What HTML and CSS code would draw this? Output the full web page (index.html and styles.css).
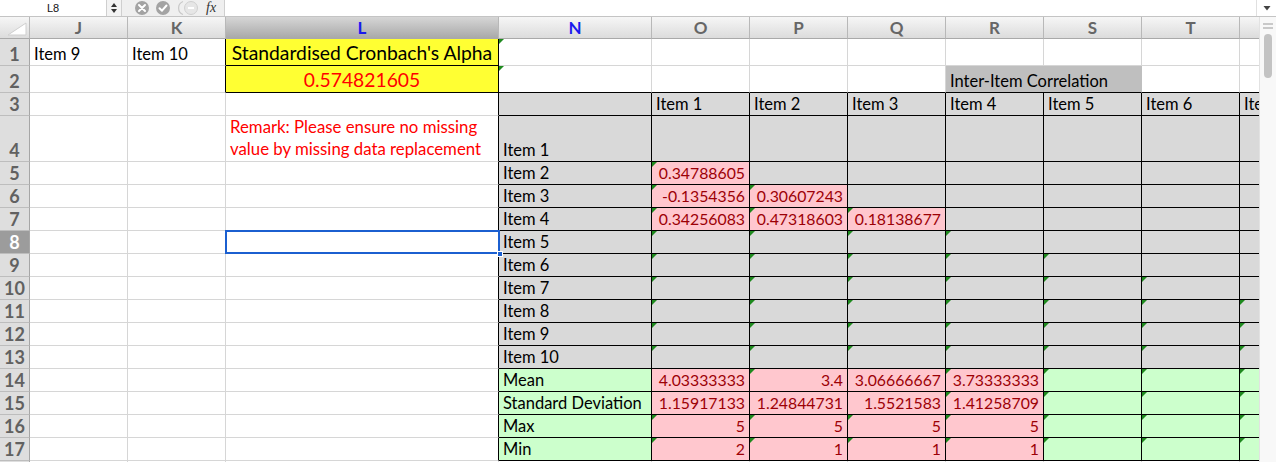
FILE: index.html
```html
<!DOCTYPE html>
<html>
<head>
<meta charset="utf-8">
<link rel="stylesheet" href="styles.css">
</head>
<body>
<div class="fbar">
  <div class="namebox">L8</div>
  <div class="stepper">
    <svg width="8" height="12" viewBox="0 0 8 12"><path d="M4 1 L7 5 L1 5 Z M4 11 L7 7 L1 7 Z" fill="#333"/></svg>
  </div>
  <div class="fbtns">
    <svg class="ico" width="16" height="16" viewBox="0 0 16 16"><circle cx="8" cy="8" r="7" fill="#a3a3a3"/><path d="M5 5 L11 11 M11 5 L5 11" stroke="#fff" stroke-width="2" stroke-linecap="round"/></svg>
    <svg class="ico" width="16" height="16" viewBox="0 0 16 16"><circle cx="8" cy="8" r="7" fill="#a3a3a3"/><path d="M4.5 8.2 L7 10.7 L11.5 5.5" stroke="#fff" stroke-width="2" fill="none" stroke-linecap="round" stroke-linejoin="round"/></svg>
    <svg class="ico ico3" width="22" height="16" viewBox="0 0 22 16"><path d="M5 1.5 A7 7 0 0 0 5 14.5" stroke="#c8c8c8" stroke-width="1.2" fill="none"/><circle cx="13" cy="8" r="6.5" fill="#e6e6e6" stroke="#d0d0d0" stroke-width="1"/><path d="M10 8 L16 8" stroke="#fff" stroke-width="2"/></svg>
    <span class="fx">fx</span>
  </div>
  <div class="finput"></div>
  <div class="fdrop">
    <svg width="8" height="6" viewBox="0 0 8 6"><path d="M0.5 1 L7.5 1 L4 5.5 Z" fill="#444"/></svg>
  </div>
</div>
<div class="main">
  <div class="sheet">
    <div class="grid">
      <!-- header -->
      <div class="c ch corner"><svg width="22" height="14" viewBox="0 0 22 14"><path d="M21 1 L21 13 L3 13 Z" fill="#fff" stroke="#cfcfcf" stroke-width="1"/></svg></div>
      <div class="c ch">J</div>
      <div class="c ch">K</div>
      <div class="c ch chsel blue">L</div>
      <div class="c ch blue">N</div>
      <div class="c ch">O</div>
      <div class="c ch">P</div>
      <div class="c ch">Q</div>
      <div class="c ch">R</div>
      <div class="c ch">S</div>
      <div class="c ch">T</div>
      <div class="c ch"></div>

      <!-- row 1 -->
      <div class="c rh">1</div>
      <div class="c">Item 9</div>
      <div class="c kb">Item 10</div>
      <div class="c yl ctr big">Standardised Cronbach's Alpha</div>
      <div class="c tri"></div>
      <div class="c"></div><div class="c"></div><div class="c"></div><div class="c"></div><div class="c"></div><div class="c"></div><div class="c"></div>

      <!-- row 2 -->
      <div class="c rh">2</div>
      <div class="c"></div>
      <div class="c kb"></div>
      <div class="c yl ctr red big">0.574821605</div>
      <div class="c tri bb"></div>
      <div class="c bb"></div><div class="c bb"></div><div class="c bb"></div>
      <div class="c bb gr span2">Inter-Item Correlation</div>
      <div class="c bb"></div><div class="c bb"></div>

      <!-- row 3 -->
      <div class="c rh">3</div>
      <div class="c"></div><div class="c"></div>
      <div class="c lb"></div>
      <div class="c tb"></div>
      <div class="c tb">Item 1</div><div class="c tb">Item 2</div><div class="c tb">Item 3</div><div class="c tb">Item 4</div><div class="c tb">Item 5</div><div class="c tb">Item 6</div><div class="c tb">Item 7</div>

      <!-- row 4 -->
      <div class="c rh">4</div>
      <div class="c"></div><div class="c"></div>
      <div class="c lb remark">Remark: Please ensure no missing value by missing data replacement</div>
      <div class="c tb">Item 1</div>
      <div class="c tb"></div><div class="c tb"></div><div class="c tb"></div><div class="c tb"></div><div class="c tb"></div><div class="c tb"></div><div class="c tb"></div>

      <!-- row 5 -->
      <div class="c rh">5</div>
      <div class="c"></div><div class="c"></div><div class="c lb"></div>
      <div class="c tb">Item 2</div>
      <div class="c pk tri">0.34788605</div>
      <div class="c tb"></div><div class="c tb"></div><div class="c tb"></div><div class="c tb"></div><div class="c tb"></div><div class="c tb"></div>

      <!-- row 6 -->
      <div class="c rh">6</div>
      <div class="c"></div><div class="c"></div><div class="c lb"></div>
      <div class="c tb">Item 3</div>
      <div class="c pk tri">-0.1354356</div>
      <div class="c pk tri">0.30607243</div>
      <div class="c tb"></div><div class="c tb"></div><div class="c tb"></div><div class="c tb"></div><div class="c tb"></div>

      <!-- row 7 -->
      <div class="c rh">7</div>
      <div class="c"></div><div class="c"></div><div class="c lb"></div>
      <div class="c tb">Item 4</div>
      <div class="c pk tri">0.34256083</div>
      <div class="c pk tri">0.47318603</div>
      <div class="c pk tri">0.18138677</div>
      <div class="c tb"></div><div class="c tb"></div><div class="c tb"></div><div class="c tb"></div>

      <!-- row 8 -->
      <div class="c rh rhsel">8</div>
      <div class="c"></div><div class="c"></div>
      <div class="c lb selcell"><span class="handle"></span></div>
      <div class="c tb">Item 5</div>
      <div class="c tb tri"></div><div class="c tb tri"></div><div class="c tb tri"></div><div class="c tb tri"></div>
      <div class="c tb"></div><div class="c tb"></div><div class="c tb"></div>

      <!-- row 9 -->
      <div class="c rh">9</div>
      <div class="c"></div><div class="c"></div><div class="c lb"></div>
      <div class="c tb">Item 6</div>
      <div class="c tb tri"></div><div class="c tb tri"></div><div class="c tb tri"></div><div class="c tb tri"></div><div class="c tb tri"></div>
      <div class="c tb"></div><div class="c tb"></div>

      <!-- row 10 -->
      <div class="c rh">10</div>
      <div class="c"></div><div class="c"></div><div class="c lb"></div>
      <div class="c tb">Item 7</div>
      <div class="c tb tri"></div><div class="c tb tri"></div><div class="c tb tri"></div><div class="c tb tri"></div><div class="c tb tri"></div><div class="c tb tri"></div>
      <div class="c tb"></div>

      <!-- row 11 -->
      <div class="c rh">11</div>
      <div class="c"></div><div class="c"></div><div class="c lb"></div>
      <div class="c tb">Item 8</div>
      <div class="c tb tri"></div><div class="c tb tri"></div><div class="c tb tri"></div><div class="c tb tri"></div><div class="c tb tri"></div><div class="c tb tri"></div><div class="c tb tri"></div>

      <!-- row 12 -->
      <div class="c rh">12</div>
      <div class="c"></div><div class="c"></div><div class="c lb"></div>
      <div class="c tb">Item 9</div>
      <div class="c tb tri"></div><div class="c tb tri"></div><div class="c tb tri"></div><div class="c tb tri"></div><div class="c tb tri"></div><div class="c tb tri"></div><div class="c tb tri"></div>

      <!-- row 13 -->
      <div class="c rh">13</div>
      <div class="c"></div><div class="c"></div><div class="c lb"></div>
      <div class="c tb">Item 10</div>
      <div class="c tb tri"></div><div class="c tb tri"></div><div class="c tb tri"></div><div class="c tb tri"></div><div class="c tb tri"></div><div class="c tb tri"></div><div class="c tb tri"></div>

      <!-- row 14 -->
      <div class="c rh">14</div>
      <div class="c"></div><div class="c"></div><div class="c lb"></div>
      <div class="c gn">Mean</div>
      <div class="c pk">4.03333333</div>
      <div class="c pk tri">3.4</div>
      <div class="c pk">3.06666667</div>
      <div class="c pk tri">3.73333333</div>
      <div class="c gn tri"></div><div class="c gn tri"></div><div class="c gn tri"></div>

      <!-- row 15 -->
      <div class="c rh">15</div>
      <div class="c"></div><div class="c"></div><div class="c lb"></div>
      <div class="c gn">Standard Deviation</div>
      <div class="c pk">1.15917133</div>
      <div class="c pk">1.24844731</div>
      <div class="c pk">1.5521583</div>
      <div class="c pk tri">1.41258709</div>
      <div class="c gn tri"></div><div class="c gn tri"></div><div class="c gn tri"></div>

      <!-- row 16 -->
      <div class="c rh">16</div>
      <div class="c"></div><div class="c"></div><div class="c lb"></div>
      <div class="c gn">Max</div>
      <div class="c pk tri">5</div>
      <div class="c pk tri">5</div>
      <div class="c pk tri">5</div>
      <div class="c pk tri">5</div>
      <div class="c gn tri"></div><div class="c gn tri"></div><div class="c gn tri"></div>

      <!-- row 17 -->
      <div class="c rh">17</div>
      <div class="c"></div><div class="c"></div><div class="c lb"></div>
      <div class="c gn">Min</div>
      <div class="c pk tri">2</div>
      <div class="c pk tri">1</div>
      <div class="c pk tri">1</div>
      <div class="c pk tri">1</div>
      <div class="c gn tri"></div><div class="c gn tri"></div><div class="c gn tri"></div>

      <!-- row 18 (only its top edge is visible) -->
      <div class="c rh"></div>
      <div class="c"></div><div class="c"></div><div class="c"></div><div class="c"></div><div class="c"></div><div class="c"></div><div class="c"></div><div class="c"></div><div class="c"></div><div class="c"></div><div class="c"></div>
    </div>
  </div>
  <div class="vscroll">
    <svg class="vsicon" width="10" height="6" viewBox="0 0 10 6"><path d="M0 1 L10 1 M0 5 L10 5" stroke="#9a9a9a" stroke-width="1"/></svg>
    <div class="thumb"></div>
  </div>
</div>
</body>
</html>
```

FILE: styles.css
```css
* { box-sizing: border-box; }
html, body { margin: 0; padding: 0; background: #fff; }
body {
  width: 1276px;
  height: 463px;
  overflow: hidden;
  font-family: Lato, "Open Sans", sans-serif;
}

/* formula bar */
.fbar {
  display: flex;
  height: 17px;
  border-bottom: 1px solid #c4c4c4;
  background: #fff;
}
.namebox {
  width: 107px;
  font-family: "Liberation Sans", Arial, sans-serif;
  font-size: 11px;
  line-height: 16px;
  text-align: center;
  color: #111;
  border-right: 1px solid #cfcfcf;
}
.stepper {
  width: 15px;
  background: #f3f3f3;
  border-right: 1px solid #cfcfcf;
  display: flex;
  align-items: center;
  justify-content: center;
}
.fbtns {
  width: 102px;
  background: #efefef;
  display: flex;
  align-items: center;
  padding-left: 12px;
  gap: 5px;
}
.ico { display: block; }
.ico3 { margin-left: 2px; }
.fx {
  font-family: "Liberation Serif", "DejaVu Serif", serif;
  font-style: italic;
  font-size: 14px;
  color: #333;
  margin-left: 1px;
  line-height: 16px;
}
.finput {
  flex: 1;
  border-left: 1px solid #cfcfcf;
}
.fdrop {
  width: 20px;
  display: flex;
  align-items: center;
  justify-content: center;
  border-left: 1px solid #e0e0e0;
}

/* main area */
.main {
  display: flex;
  height: 445px;
}
.sheet {
  width: 1259px;
  overflow: hidden;
}
.grid {
  display: grid;
  grid-template-columns: 30px 98px 98px 273px 153px repeat(7, 98px);
  grid-template-rows: 22px 27px 27px 23px 46px repeat(13, 23px) 23px;
  width: 1338px;
  font-size: 16.5px;
  color: #000;
}
.c {
  position: relative;
  border-right: 1px solid #d6d6d6;
  border-bottom: 1px solid #d6d6d6;
  display: flex;
  align-items: flex-end;
  padding: 0 4px 1px 4px;
  line-height: 20px;
  white-space: nowrap;
  overflow: hidden;
}

/* headers */
.ch {
  background: linear-gradient(#f6f6f6, #dcdcdc);
  border-right: 1px solid #b8b8b8;
  border-bottom: 1px solid #a9a9a9;
  justify-content: center;
  align-items: center;
  padding: 0;
  font-weight: bold;
  font-size: 17px;
  color: #666;
}
.chsel { background: linear-gradient(#d6d6d6, #a9a9a9); }
.blue { color: #1a1aee; }
.corner {
  justify-content: flex-end;
  align-items: flex-end;
  padding: 0 2px 2px 0;
}
.corner svg { display: block; }
.rh {
  background: #dedede;
  border-right: 1px solid #a6a6a6;
  border-bottom: 1px solid #bdbdbd;
  justify-content: center;
  padding: 0 0 1px 0;
  font-weight: bold;
  font-size: 18px;
  color: #616161;
}
.rhsel { background: #9c9c9c; color: #fff; }

/* cell styles */
.kb { border-right-color: #000; }
.lb { border-right-color: #000; }
.bb { border-bottom-color: #000; }
.yl {
  background: #ffff33;
  border-right-color: #000;
  border-bottom-color: #000;
}
.big { font-size: 19.3px; line-height: 24px; padding-bottom: 0; }
.ctr { justify-content: center; }
.red { color: #ff0000; }
.gr {
  background: #bfbfbf;
  border-right-color: #bfbfbf;
}
.span2 { grid-column: span 2; }
.tb {
  background: #d9d9d9;
  border-right-color: #000;
  border-bottom-color: #000;
}
.pk {
  background: #ffc7ce;
  color: #9c0006;
  font-size: 15.8px;
  justify-content: flex-end;
  border-right-color: #000;
  border-bottom-color: #000;
}
.gn {
  background: #ccffcc;
  border-right-color: #000;
  border-bottom-color: #000;
}
.remark {
  white-space: normal;
  color: #ff0000;
  font-size: 16.8px;
  line-height: 22px;
  padding-bottom: 1px;
}
.tri::before {
  content: "";
  position: absolute;
  left: 0;
  top: 0;
  border-top: 5px solid #1e8a1e;
  border-right: 5px solid transparent;
}
.selcell { overflow: visible; z-index: 2; }
.selcell::after {
  content: "";
  position: absolute;
  left: -1px;
  top: -1px;
  right: -2px;
  bottom: -1px;
  border: 2px solid #1b5fd0;
}
.handle {
  position: absolute;
  right: -5px;
  bottom: -4px;
  width: 6px;
  height: 6px;
  background: #1b5fd0;
  border: 1px solid #fff;
  z-index: 3;
}

/* vertical scrollbar */
.vscroll {
  width: 17px;
  background: #f8f8f8;
  border-left: 1px solid #e2e2e2;
  display: flex;
  flex-direction: column;
  align-items: center;
  padding-top: 6px;
}
.vsicon { display: block; }
.thumb {
  margin-top: 5px;
  width: 8px;
  height: 44px;
  border-radius: 4px;
  background: #c3c3c3;
}
```
